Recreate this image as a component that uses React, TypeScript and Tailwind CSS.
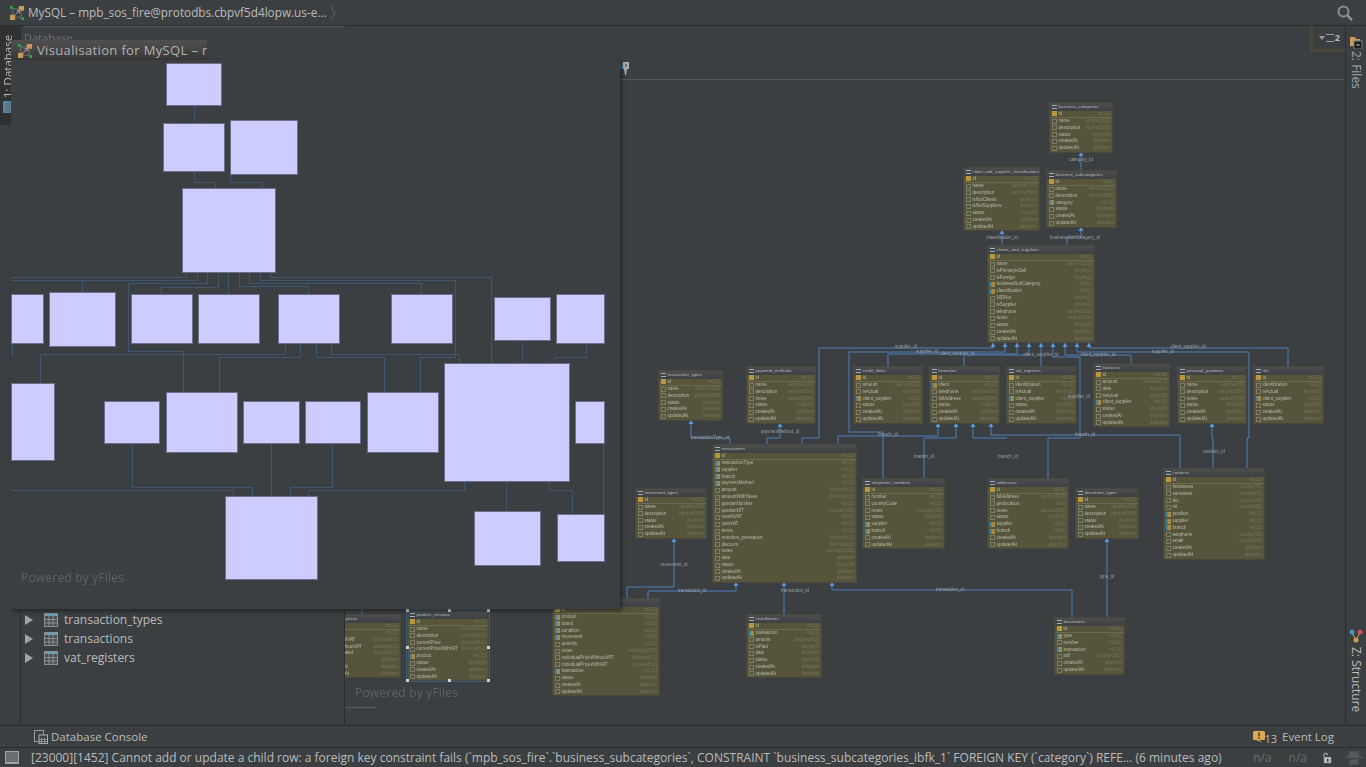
import React from "react";

const UI_FONT = "font-['Open_Sans',sans-serif]";

// canvas origin in screen coordinates
const OX = 345;
const OY = 26;

type Tbl = { name: string; x: number; y: number; r: number; cols: string[]; selected?: boolean };

const base6 = ["id int(11) p", "name varchar(100)", "description varchar(500)", "status tinyint(4)", "createdAt datetime", "updatedAt datetime"];
const base7 = ["id int(11) p", "name varchar(100)", "description varchar(500)", "notes varchar(500)", "status tinyint(4)", "createdAt datetime", "updatedAt datetime"];

const tables: Tbl[] = [
  { name: "business_categories", x: 1049, y: 102, r: 1113, cols: base6 },
  { name: "business_subcategories", x: 1046, y: 170, r: 1117, cols: ["id int(11) p", "name varchar(100)", "description varchar(500)", "category int(11) f", "status tinyint(4)", "createdAt datetime", "updatedAt datetime"] },
  { name: "client_and_supplier_classifications", x: 963, y: 167, r: 1040, cols: ["id int(11) p", "name varchar(100)", "description varchar(500)", "isNotClients tinyint(1)", "isNotSuppliers tinyint(1)", "status tinyint(4)", "createdAt datetime", "updatedAt datetime"] },
  { name: "clients_and_suppliers", x: 987, y: 245, r: 1095, cols: ["id int(11) p", "name varchar(100)", "isPrimaryIsSell tinyint(1)", "isForeign tinyint(1)", "businessSubCategory int(11) f", "classification int(11) f", "NIDNot tinyint(1)", "isSupplier tinyint(1)", "telephone varchar(100)", "notes varchar(500)", "status tinyint(4)", "createdAt datetime", "updatedAt datetime"] },
  { name: "transaction_types", x: 658, y: 370, r: 723, cols: base6 },
  { name: "payment_methods", x: 746, y: 366, r: 816, cols: base7 },
  { name: "credit_limits", x: 853, y: 366, r: 923, cols: ["id int(11) p", "amount decimal(8,2)", "isActual tinyint(1)", "client_supplier int(11) f", "status tinyint(4)", "createdAt datetime", "updatedAt datetime"] },
  { name: "branches", x: 929, y: 366, r: 1000, cols: ["id int(11) p", "client int(11) f", "telephone varchar(100)", "fullAddress varchar(500)", "status tinyint(4)", "createdAt datetime", "updatedAt datetime"] },
  { name: "vat_registers", x: 1006, y: 366, r: 1077, cols: ["id int(11) p", "identification int(11)", "isActual tinyint(1)", "client_supplier int(11) f", "status tinyint(4)", "createdAt datetime", "updatedAt datetime"] },
  { name: "balances", x: 1093, y: 363, r: 1170, cols: ["id int(11) p", "amount decimal(8,2)", "date datetime", "isActual tinyint(1)", "client_supplier int(11) f", "status tinyint(4)", "createdAt datetime", "updatedAt datetime"] },
  { name: "personal_positions", x: 1177, y: 366, r: 1247, cols: ["id int(11) p", "name varchar(75)", "description varchar(500)", "notes varchar(500)", "status tinyint(4)", "createdAt datetime", "updatedAt datetime"] },
  { name: "rits", x: 1253, y: 366, r: 1324, cols: ["id int(11) p", "identification int(11)", "isActual tinyint(1)", "client_supplier int(11) f", "status tinyint(4)", "createdAt datetime", "updatedAt datetime"] },
  { name: "transactions", x: 712, y: 444, r: 857, cols: ["id int(11) p", "transactionType int(11) f", "supplier int(11) f", "branch int(11) f", "paymentMethod int(11) f", "amount decimal(8,2)", "amountWithTaxes decimal(8,2)", "quedanNumber int(11)", "quedanNIT varchar(100)", "monthVAT int(11)", "yearVAT int(11)", "terms int(11)", "retention_perception decimal(8,2)", "discount decimal(8,2)", "notes varchar(1000)", "date datetime", "status tinyint(4)", "createdAt datetime", "updatedAt datetime"] },
  { name: "telephone_numbers", x: 862, y: 478, r: 945, cols: ["id int(11) p", "number int(11)", "countryCode int(11)", "notes varchar(500)", "status tinyint(4)", "supplier int(11) f", "branch int(11) f", "createdAt datetime", "updatedAt datetime"] },
  { name: "addresses", x: 987, y: 478, r: 1069, cols: ["id int(11) p", "fullAddress varchar(500)", "geolocation point", "notes varchar(500)", "status tinyint(4)", "supplier int(11) f", "branch int(11) f", "createdAt datetime", "updatedAt datetime"] },
  { name: "document_types", x: 1075, y: 488, r: 1139, cols: base6 },
  { name: "movement_types", x: 635, y: 488, r: 707, cols: base6 },
  { name: "contacts", x: 1163, y: 468, r: 1265, cols: ["id int(11) p", "firstnames varchar(75)", "surnames varchar(75)", "dui varchar(15)", "nit varchar(15)", "position int(11) f", "supplier int(11) f", "branch int(11) f", "telephone varchar(50)", "email varchar(50)", "createdAt datetime", "updatedAt datetime"] },
  { name: "product_prices", x: 319, y: 614, r: 401, cols: ["id int(11) p", "product int(11) f", "priceWithVAT decimal(8,2)", "priceWithoutVAT decimal(8,2)", "isCalculated decimal(8,2)", "date datetime", "createdAt datetime", "updatedAt datetime"] },
  { name: "product_versions", x: 407, y: 610, r: 489, selected: true, cols: ["id int(11) p", "name varchar(100)", "description varchar(500)", "currentPrice decimal(8,2)", "currentPriceWithVAT decimal(8,2)", "product int(11) f", "status tinyint(4)", "createdAt datetime", "updatedAt datetime"] },
  { name: "transaction_details", x: 552, y: 598, r: 660, cols: ["id int(11) p", "product int(11) f", "brand int(11) f", "condition int(11) f", "movement int(11) f", "quantity int(11)", "notes varchar(1000)", "individualPriceWithoutVAT decimal(8,2)", "individualPriceWithVAT decimal(8,2)", "transaction int(11) f", "status tinyint(4)", "createdAt datetime", "updatedAt datetime"] },
  { name: "installments", x: 746, y: 614, r: 822, cols: ["id int(11) p", "transaction int(11) f", "amount decimal(8,2)", "isPaid tinyint(1)", "date datetime", "status tinyint(4)", "createdAt datetime", "updatedAt datetime"] },
  { name: "documents", x: 1054, y: 617, r: 1125, cols: ["id int(11) p", "type int(11) f", "number int(11)", "transaction int(11) f", "pdf varchar(100)", "createdAt datetime", "updatedAt datetime"] },
];

const edges: string[] = [
  "1081,152 1081,170",
  "1081,227 1081,237 1067,237 1067,245",
  "1002,230 1002,245",
  "993,343 993,348 819,348 819,438 802,438 802,444",
  "1005,343 1005,352 849,352 849,432 883,432 883,478",
  "1017,343 1017,354 888,354 888,366",
  "1029,343 1029,355 964,355 964,366",
  "1041,343 1041,366",
  "1053,343 1053,357 1080,357 1080,438 1048,438 1048,478",
  "1065,343 1065,355 1131,355 1131,363",
  "1077,343 1077,352 1249,352 1249,438 1247,438 1247,468",
  "1089,343 1089,348 1288,348 1288,366",
  "938,423 938,436 838,436 838,444",
  "956,423 956,438 924,438 924,478",
  "973,423 973,438 1007,438",
  "991,423 991,435 1180,435 1180,468",
  "1212,423 1212,438 1213,438 1213,468",
  "691,420 691,438 730,438 730,444",
  "780,423 780,438 767,438 767,444",
  "674,538 674,587 627,587 627,598",
  "736,582 736,591 648,591 648,598",
  "784,582 784,614",
  "832,582 832,590 1072,590 1072,617",
  "1107,538 1107,617",
  "362,600 362,614",
];

const arrows: [number, number][] = [
  [1081, 152], [1081, 227], [1002, 230], [993, 343], [1005, 343], [1017, 343], [1029, 343], [1041, 343], [1053, 343], [1065, 343], [1077, 343], [1089, 343],
  [938, 423], [956, 423], [973, 423], [991, 423], [1212, 423], [691, 420], [780, 423], [674, 538], [736, 582], [784, 582], [832, 582], [1107, 538],
];

const labels: [string, number, number][] = [
  ["category_id", 1081, 160],
  ["businessSubCategory_id", 1075, 238],
  ["classification_id", 1002, 238],
  ["supplier_id", 906, 347],
  ["supplier_id", 927, 352],
  ["client_supplier_id", 957, 354],
  ["client_supplier_id", 1041, 355],
  ["client_supplier_id", 1098, 355],
  ["client_supplier_id", 1188, 347],
  ["supplier_id", 1163, 352],
  ["supplier_id", 1079, 397],
  ["branch_id", 888, 435],
  ["branch_id", 924, 457],
  ["branch_id", 1085, 435],
  ["branch_id", 1008, 457],
  ["position_id", 1214, 452],
  ["transactionType_id", 710, 438],
  ["paymentMethod_id", 780, 432],
  ["movement_id", 674, 565],
  ["transaction_id", 692, 591],
  ["transaction_id", 795, 591],
  ["transaction_id", 950, 590],
  ["type_id", 1107, 577],
];

const boxes: [number, number, number, number][] = [
  [166, 63, 222, 106], [163, 123, 225, 172], [230, 120, 298, 175], [182, 188, 276, 273],
  [11, 294, 44, 344], [49, 292, 116, 347], [131, 294, 193, 344], [198, 294, 260, 344], [278, 294, 340, 344], [391, 294, 453, 344], [494, 297, 551, 341], [556, 294, 605, 344],
  [11, 383, 55, 461], [104, 401, 160, 444], [166, 392, 238, 453], [243, 401, 300, 444], [305, 401, 361, 444], [367, 392, 439, 453], [444, 363, 570, 482], [575, 401, 605, 444],
  [225, 496, 318, 580], [474, 511, 541, 566], [557, 514, 605, 562],
];

const miniEdges: string[] = [
  "194,106 194,123", "230,175 230,182 262,182 262,188", "194,172 194,182 215,182 215,188",
  "11,277 186,277 186,273", "11,280 197,280 197,273", "128,351 128,283 207,283 207,273", "82,292 82,280 100,280",
  "161,294 161,287 218,287 218,273", "228,273 228,294", "308,294 308,286 239,286 239,273", "421,294 421,283 249,283 249,273",
  "420,392 420,357 455,357 455,280 260,280 260,273", "491,363 491,277 270,277 270,273", "128,351 183,351 183,392",
  "285,344 285,354 40,354 40,383", "300,344 300,357 219,357 219,392", "316,344 316,357 384,357 384,392", "331,344 331,354 459,354 459,363",
  "12,344 12,357", "522,341 522,363", "586,344 586,357 554,357 554,363",
  "132,444 132,487 252,487 252,496", "271,444 271,496", "332,444 332,487 290,487 290,496", "11,490 233,490 233,496",
  "308,496 308,490 464,490 464,482", "506,482 506,511", "549,482 549,490 572,490 572,514", "603,444 603,514",
];

function RowIcon({ kind }: { kind?: string }) {
  if (kind === "p") return <span className="h-[5px] w-[5px] shrink-0 bg-[#b8953f]" />;
  if (kind === "f") return <span className="h-[5px] w-[5px] shrink-0 border-l-2 border-[#3f86b5] bg-[#a88a45]" />;
  return <span className="h-[5px] w-[5px] shrink-0 border border-[#7d7d6c]" />;
}

function DbTable({ t }: { t: Tbl }) {
  return (
    <div
      className={`absolute flex flex-col overflow-visible border border-[#47483a] bg-[#56553b] font-['Liberation_Sans',sans-serif] blur-[0.35px] ${t.selected ? "outline outline-1 outline-[#3d5a80]" : ""}`}
      style={{ left: t.x - OX, top: t.y - OY, width: t.r - t.x }}
    >
      <div className="flex h-[8px] shrink-0 items-center gap-[1.5px] overflow-hidden bg-gradient-to-b from-[#4b4d4f] to-[#3e4042] px-[2px] text-[4.4px] leading-none text-[#b5b8ba]">
        <span className="h-[4px] w-[5px] shrink-0 border-y border-[#9fadb8]" />
        <span className="whitespace-nowrap">{t.name}</span>
      </div>
      {t.cols.map((c) => {
        const [name, type, kind] = c.split(" ");
        return (
          <div
            key={name}
            className={`flex h-[6.8px] shrink-0 items-center gap-[1.5px] px-[2px] text-[4.5px] leading-none ${kind === "p" ? "border-b border-[#6c6b50]" : ""}`}
          >
            <RowIcon kind={kind} />
            <span className="whitespace-nowrap text-[#b9b9a6]">{name}</span>
            <span className="ml-auto whitespace-nowrap pl-[2px] text-[#74735a]">{type}</span>
          </div>
        );
      })}
      {t.selected && (
        <>
          <span className="absolute -left-[2px] -top-[2px] h-[3px] w-[3px] bg-[#cfd3d6]" />
          <span className="absolute left-1/2 -top-[2px] h-[3px] w-[3px] bg-[#cfd3d6]" />
          <span className="absolute -right-[2px] -top-[2px] h-[3px] w-[3px] bg-[#cfd3d6]" />
          <span className="absolute -left-[2px] top-1/2 h-[3px] w-[3px] bg-[#cfd3d6]" />
          <span className="absolute -right-[2px] top-1/2 h-[3px] w-[3px] bg-[#cfd3d6]" />
          <span className="absolute -left-[2px] -bottom-[2px] h-[3px] w-[3px] bg-[#cfd3d6]" />
          <span className="absolute left-1/2 -bottom-[2px] h-[3px] w-[3px] bg-[#cfd3d6]" />
          <span className="absolute -right-[2px] -bottom-[2px] h-[3px] w-[3px] bg-[#cfd3d6]" />
        </>
      )}
    </div>
  );
}

function DiagramIcon({ className = "" }: { className?: string }) {
  return (
    <svg viewBox="0 0 15 15" className={className}>
      <path d="M3 3H12V12H3Z" fill="none" stroke="#b9b9b9" strokeWidth="0.8" strokeDasharray="1 1" />
      <path d="M5 10L10 5M7 5H10V8" fill="none" stroke="#a8a8a8" strokeWidth="1" />
      <rect x="0" y="0" width="3" height="3" fill="#2aa84a" />
      <rect x="12" y="12" width="3" height="3" fill="#2aa84a" />
      <rect x="9.5" y="0" width="5.5" height="5" fill="#c99b5a" />
      <rect x="0" y="9.5" width="5.5" height="5.5" fill="#c99b5a" />
    </svg>
  );
}

function TableIcon() {
  return (
    <svg viewBox="0 0 14 14" className="h-[14px] w-[14px] shrink-0">
      <rect x="0.5" y="0.5" width="13" height="13" fill="#4b4f52" stroke="#8b9093" />
      <rect x="1" y="1" width="12" height="2" fill="#6a9fbc" />
      <path d="M5 3V13.5M9 3V13.5M1 6.5H13M1 10H13" stroke="#8b9093" strokeWidth="1" />
    </svg>
  );
}

function TreeRow({ name }: { name: string }) {
  return (
    <div className="flex h-[19px] items-center pl-[1px]">
      <span className="h-0 w-0 border-y-[5px] border-l-[8px] border-y-transparent border-l-[#a0a3a5]" />
      <span className="ml-[11px]">
        <TableIcon />
      </span>
      <span className="ml-[6px] text-[12px] text-[#bbbbbb]">{name}</span>
    </div>
  );
}

export default function App() {
  return (
    <div className={`relative flex h-[767px] w-[1366px] flex-col overflow-hidden bg-[#3c3f41] ${UI_FONT}`}>
      {/* navigation bar */}
      <div className="flex h-[26px] shrink-0 items-center border-b border-[#2b2d2e] pl-[10px] pr-[13px]">
        <DiagramIcon className="h-[14px] w-[14px]" />
        <span className="ml-[4px] text-[11.75px] text-[#bbbbbb]">MySQL – mpb_sos_fire@protodbs.cbpvf5d4lopw.us-e...</span>
        <svg viewBox="0 0 6 16" className="ml-[3px] h-[16px] w-[6px]">
          <path d="M0.5 1L5 8L0.5 15" fill="none" stroke="#606365" />
        </svg>
        <svg viewBox="0 0 16 16" className="ml-auto h-[16px] w-[16px]">
          <circle cx="6.5" cy="6.5" r="5" fill="none" stroke="#8c8f91" strokeWidth="2" />
          <path d="M10.5 10.5L15 15" stroke="#8c8f91" strokeWidth="2.5" />
        </svg>
      </div>

      {/* workspace */}
      <div className="flex min-h-0 flex-1">
        {/* left tool strip */}
        <div className="w-[20px] shrink-0">
          <div className="flex h-[99px] flex-col items-start bg-[#2f3133] pl-[3px] pt-[8px]">
            <span className="h-[64px] rotate-180 whitespace-nowrap text-[11.5px] leading-[10px] text-[#bbbbbb] [writing-mode:vertical-rl]">1: Database</span>
            <span className="mt-[3px] h-[12px] w-[9px] shrink-0 border-2 border-[#4e88ad] bg-[#6d7072]" />
          </div>
        </div>

        {/* database tree */}
        <div className="flex w-[325px] shrink-0 flex-col border-x border-[#2b2d2e] pl-[3px]">
          <div className="border-t border-[#56595b] pt-[4px] text-[11px] leading-[14px] text-[#6f7274]">Database</div>
          <div className="mb-[58px] mt-auto">
            <TreeRow name="transaction_types" />
            <TreeRow name="transactions" />
            <TreeRow name="vat_registers" />
          </div>
        </div>

        {/* diagram canvas */}
        <div className="relative min-w-0 flex-1 overflow-hidden">
          <div className="absolute left-0 right-0 top-[53px] h-px bg-[#55585a]" />
          <div className="absolute right-0 top-0 flex h-[26px] w-[35px] items-center justify-end border-b-[3px] border-l-[3px] border-[#4a4639] pr-[5px]">
            <span className="h-0 w-0 border-x-[3px] border-t-[4px] border-x-transparent border-t-[#9a9a9a]" />
            <span className="ml-[1px] h-[8px] w-[8px] border-y border-[#9a9a9a]" />
            <span className="ml-[1px] text-[9px] font-bold text-[#bbbbbb]">2</span>
          </div>
          <svg viewBox="0 0 10 15" className="absolute left-[275px] top-[35px] h-[15px] w-[10px]">
            <path d="M3 1H9V8H7L6 14H5L4 8H2Z" fill="#a8abad" />
            <path d="M6 3V6" stroke="#3c3f41" />
            <rect x="0" y="4" width="3" height="4" fill="#2f6a8f" />
          </svg>
          <svg viewBox={`${OX} ${OY} 1000 699`} className="absolute left-0 top-0 h-[699px] w-[1000px]">
            {edges.map((e) => (
              <polyline key={e} points={e} fill="none" stroke="#4a7fbd" strokeWidth="1" />
            ))}
            {arrows.map(([x, y]) => (
              <polygon key={`${x}-${y}`} points={`${x - 2.5},${y + 4} ${x + 2.5},${y + 4} ${x},${y}`} fill="#5a9be0" />
            ))}
          </svg>
          {tables.map((t) => (
            <DbTable key={t.name} t={t} />
          ))}
          {labels.map(([text, x, y]) => (
            <span
              key={`${text}-${x}`}
              className="absolute -translate-x-1/2 -translate-y-1/2 whitespace-nowrap font-['Liberation_Sans',sans-serif] text-[4.5px] leading-none text-[#9aa0a5] blur-[0.2px]"
              style={{ left: x - OX, top: y - OY }}
            >
              {text}
            </span>
          ))}
          <span className="absolute left-[10px] top-[658px] text-[12px] tracking-[0.2px] text-[#5f6264]">Powered by yFiles</span>
          <div className="absolute left-0 top-[681px] h-px w-[32px] bg-[#5a5d5f]" />
        </div>

        {/* right tool strip */}
        <div className="flex w-[21px] shrink-0 flex-col items-center border-l border-[#2b2d2e] pt-[9px]">
          <svg viewBox="0 0 14 14" className="h-[14px] w-[14px]">
            <path d="M1 2H6L7 4H11V11H1Z" fill="#c99b5a" />
            <rect x="5" y="6" width="8" height="8" fill="#1b1c1d" stroke="#77797b" />
            <path d="M7.5 10H10.5" stroke="#dddddd" />
          </svg>
          <span className="mt-[2px] text-[12px] leading-none text-[#9aa7b0] [writing-mode:vertical-rl]">2: Files</span>
          <svg viewBox="0 0 14 14" className="mt-auto h-[14px] w-[14px]">
            <path d="M3 4L7 11L11 4" fill="none" stroke="#c99b5a" strokeWidth="1" />
            <circle cx="3" cy="3" r="2.5" fill="#4e93c8" />
            <circle cx="11" cy="3" r="2.5" fill="#c75450" />
            <circle cx="7" cy="11" r="2.5" fill="#c99b5a" />
          </svg>
          <span className="mb-[13px] mt-[4px] text-[12px] leading-none text-[#bbbbbb] [writing-mode:vertical-rl]">Z: Structure</span>
        </div>
      </div>

      {/* tool window bar */}
      <div className="flex h-[23px] shrink-0 items-center border-y border-[#2b2d2e] pl-[34px] pr-[32px] text-[11.5px] text-[#bbbbbb]">
        <svg viewBox="0 0 14 14" className="h-[14px] w-[14px]">
          <rect x="0.5" y="0.5" width="9" height="11" fill="none" stroke="#9a9da0" />
          <rect x="5" y="5" width="8.5" height="8.5" fill="#3c3f41" stroke="#a9acae" />
          <path d="M7.5 7.5V13.5M10.5 7.5V13.5M5 9.5H13.5M5 11.5H13.5" stroke="#a9acae" strokeWidth="0.7" />
        </svg>
        <span className="ml-[3px]">Database Console</span>
        <svg viewBox="0 0 12 12" className="ml-auto h-[12px] w-[12px]">
          <path d="M0 1.5Q0 0 1.5 0H10.5Q12 0 12 1.5V8Q12 9 10.5 9H6.5L9 11.5L3 9H1.5Q0 9 0 8Z" fill="#e0a94f" />
          <path d="M6 1.5V5.5M6 6.5V8" stroke="#3c3f41" strokeWidth="1.6" />
        </svg>
        <span className="mt-[5px] text-[11px]">13</span>
        <span className="ml-[5px]">Event Log</span>
      </div>

      {/* status bar */}
      <div className="flex h-[19px] shrink-0 items-center pl-[5px] pr-[4px] text-[12px] text-[#bbbbbb]">
        <span className="h-[13px] w-[14px] shrink-0 border-b-2 border-l border-r border-t border-[#a0a3a5] bg-[#6b6e70]" />
        <span className="ml-[12px] whitespace-nowrap">
          [23000][1452] Cannot add or update a child row: a foreign key constraint fails (`mpb_sos_fire`.`business_subcategories`, CONSTRAINT `business_subcategories_ibfk_1` FOREIGN KEY (`category`) REFE... (6 minutes ago)
        </span>
        <span className="ml-auto text-[#6a6d6f]">n/a</span>
        <span className="ml-[17px] text-[#6a6d6f]">n/a</span>
        <svg viewBox="0 0 12 12" className="ml-[15px] h-[12px] w-[11px]">
          <path d="M2 5V3Q2 1 4 1Q6 1 6 3" fill="none" stroke="#a9acae" strokeWidth="1.2" />
          <rect x="2" y="5" width="8" height="6.5" fill="#b4b7b9" />
          <rect x="5.5" y="7" width="1.5" height="3" fill="#3c3f41" />
        </svg>
        <svg viewBox="0 0 14 14" className="ml-[13px] h-[16px] w-[16px]">
          <path d="M3 1H11L12 6H14V7H0V6H2ZM3 8H11V13H3Z" fill="#55585a" />
        </svg>
      </div>

      {/* floating visualisation preview */}
      <div className="absolute left-[207px] top-[27px] h-[33px] w-[413px] bg-[#3c3f41]" />
      <div className="absolute left-[11px] top-[40px] flex h-[20px] w-[196px] items-center bg-gradient-to-b from-[#505050] to-[#383838] pl-[7px] pt-[1px]">
        <DiagramIcon className="h-[14px] w-[14px] shrink-0" />
        <span className="ml-[5px] overflow-hidden whitespace-nowrap text-[13px] tracking-[0.35px] text-[#b0b3b5]">Visualisation for MySQL – r</span>
      </div>
      <div className="absolute left-[11px] top-[60px] h-[549px] w-[609px] bg-[#3c3f41] shadow-[2px_2px_4px_rgba(0,0,0,0.45)]">
        <svg viewBox="11 60 594 549" className="absolute left-0 top-0 h-[549px] w-[594px]">
          {miniEdges.map((e) => (
            <polyline key={e} points={e} fill="none" stroke="#3f5673" strokeWidth="1" shapeRendering="crispEdges" />
          ))}
          {boxes.map(([x, y, r, b]) => (
            <rect key={`${x}-${y}`} x={x + 0.5} y={y + 0.5} width={r - x - 1} height={b - y - 1} fill="#ccccff" stroke="#6d6d8c" strokeWidth="1" />
          ))}
        </svg>
        <span className="absolute left-[10px] top-[509px] text-[12px] tracking-[0.2px] text-[#5f6264]">Powered by yFiles</span>
      </div>
    </div>
  );
}
